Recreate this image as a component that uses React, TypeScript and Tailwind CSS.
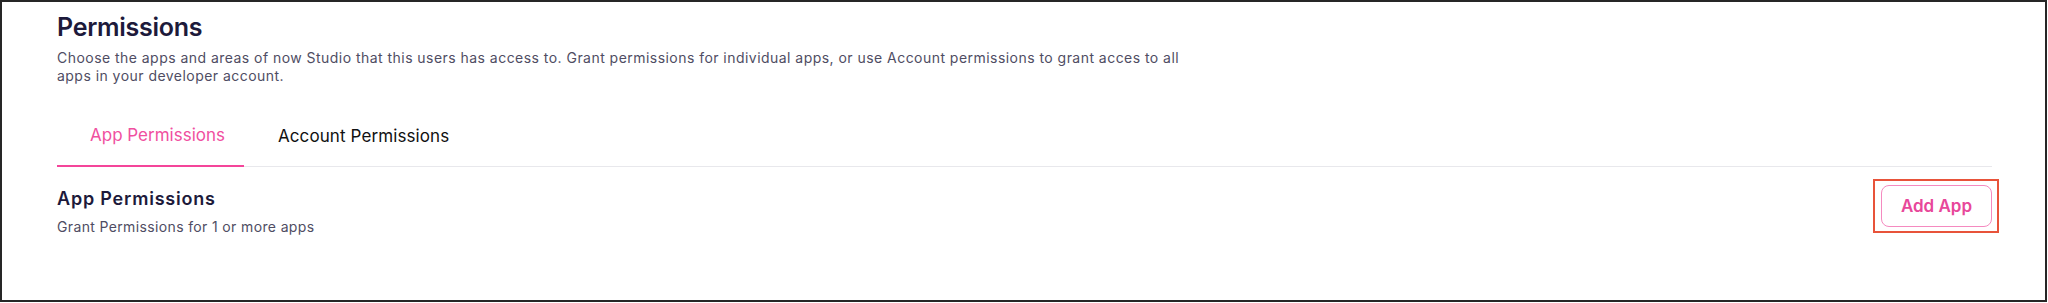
import React from "react";

export default function App() {
  return (
    <div className="relative w-[2047px] h-[302px] border-2 border-[#262626] bg-white font-['Inter',sans-serif]">
      <div className="pl-[55px] pr-[53px] pt-[9px]">
        <h1 className="text-[25px] leading-[32px] font-semibold tracking-[-0.27px] text-[#1d1a3b]">Permissions</h1>
        <p className="mt-[6px] max-w-[1150px] text-[14px] leading-[18px] tracking-[0.46px] text-[#4f4d63]">
          Choose the apps and areas of now Studio that this users has access to. Grant permissions for individual apps, or use Account permissions to grant acces to all apps in your developer account.
        </p>
        <div className="mt-[26px] flex border-b border-[#e8e8ec]">
          <button className="-mb-px pl-[33px] pr-[19px] pt-[12px] pb-[18px] text-[17px] leading-[24px] tracking-[0px] text-[#f0509f] border-b-2 border-[#f4459a]">
            App Permissions
          </button>
          <button className="pl-[34px] pr-[19px] pt-[12px] pb-[18px] text-[17px] leading-[24px] tracking-[0.1px] text-[#111111]">
            Account Permissions
          </button>
        </div>
        <div className="mt-[18px] flex items-start justify-between">
          <div>
            <h2 className="text-[18px] leading-[28px] font-semibold tracking-[0.8px] text-[#1d1a3b]">App Permissions</h2>
            <p className="mt-[5px] text-[14px] leading-[18px] tracking-[0.36px] text-[#4f4d63]">Grant Permissions for 1 or more apps</p>
          </div>
          <button className="relative w-[111px] h-[42px] rounded-[8px] border border-[#f58ac0] text-[17px] leading-[24px] font-semibold text-[#e8479a]">
            Add App
            <span className="pointer-events-none absolute -left-[9px] -right-[8px] -top-[7px] -bottom-[7px] border-2 border-[#e8533a]" />
          </button>
        </div>
      </div>
    </div>
  );
}
